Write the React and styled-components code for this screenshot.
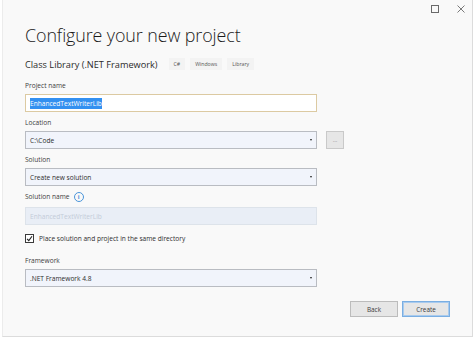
import React from "react";
import styled, { createGlobalStyle } from "styled-components";

const GlobalStyle = createGlobalStyle`
  html, body {
    margin: 0;
    padding: 0;
    background: #ffffff;
  }
  body {
    font-family: "Open Sans", "Noto Sans", sans-serif;
  }
`;

const Window = styled.div`
  box-sizing: border-box;
  width: 471px;
  height: 337px;
  margin-left: 2px;
  background: #f9f9f9;
  border-right: 1px solid #dcdcdc;
  border-bottom: 1px solid #dcdcdc;
  border-left: 1px solid #ececec;
  display: flex;
  flex-direction: column;
`;

const TitleBar = styled.div`
  height: 18px;
  display: flex;
  justify-content: flex-end;
  align-items: center;
  gap: 14px;
  padding-right: 5px;
`;

const WinButton = styled.div`
  width: 12px;
  height: 12px;
  display: flex;
  align-items: center;
  justify-content: center;
  color: #6a6a6a;
`;

const Content = styled.div`
  padding: 0 0 0 22px;
  display: flex;
  flex-direction: column;
`;

const Title = styled.h1`
  margin: 4px 0 0 0;
  font-size: 17.9px;
  font-weight: 300;
  color: #1b1b1b;
  line-height: 26px;
  letter-spacing: -0.1px;
`;

const SubRow = styled.div`
  display: flex;
  align-items: center;
  gap: 5px;
  margin-top: 9px;
  height: 14px;
`;

const SubTitle = styled.span`
  font-size: 9.2px;
  color: #2b2b2b;
  margin-right: 6px;
`;

const Tag = styled.span`
  font-size: 5.2px;
  color: #555;
  background: #f3f3f3;
  padding: 2px 5px;
`;

const Field = styled.div`
  display: flex;
  flex-direction: column;
  gap: 4px;
  margin-top: ${(p) => p.$top}px;
`;

const Label = styled.div`
  display: flex;
  align-items: center;
  gap: 4px;
  height: ${(p) => p.$h || 10}px;
  font-size: 6.6px;
  color: #3c3c3c;
`;

const InfoIcon = styled.span`
  box-sizing: border-box;
  width: 10px;
  height: 10px;
  border: 1px solid #4a95da;
  border-radius: 50%;
  color: #3a88d4;
  font-size: 6px;
  font-weight: 700;
  display: flex;
  align-items: center;
  justify-content: center;
  line-height: 1;
`;

const Row = styled.div`
  display: flex;
  align-items: center;
  gap: 9px;
`;

const Box = styled.div`
  box-sizing: border-box;
  width: 292px;
  height: 18px;
  display: flex;
  align-items: center;
  justify-content: space-between;
  padding: 0 3px 0 4px;
  font-size: 6.6px;
  background: ${(p) =>
    p.$variant === "focus" ? "#ffffff" : p.$variant === "disabled" ? "#e9eef6" : "#f1f4fb"};
  border: 1px solid
    ${(p) =>
      p.$variant === "focus" ? "#dccaa2" : p.$variant === "disabled" ? "#dde3ea" : "#b9bcc2"};
  color: ${(p) => (p.$variant === "disabled" ? "#c3ccd8" : "#2d2d2d")};
`;

const Selected = styled.span`
  background: #3390f0;
  color: #ffffff;
  padding: 1px 0;
  line-height: 9px;
`;

const Caret = styled.span`
  width: 0;
  height: 0;
  border-left: 1.5px solid transparent;
  border-right: 1.5px solid transparent;
  border-top: 2px solid #222;
  margin-right: 1px;
`;

const SmallButton = styled.div`
  box-sizing: border-box;
  width: 18px;
  height: 18px;
  background: #e6e6e6;
  border: 1px solid #c9c9c9;
  display: flex;
  align-items: center;
  justify-content: center;
  font-size: 6px;
  color: #888;
`;

const CheckRow = styled.label`
  display: flex;
  align-items: center;
  gap: 5px;
  margin-top: 9px;
  height: 9px;
  font-size: 6.6px;
  color: #2d2d2d;
`;

const CheckBox = styled.span`
  box-sizing: border-box;
  width: 9px;
  height: 9px;
  border: 1px solid #3a3a3a;
  background: #fff;
  display: flex;
  align-items: center;
  justify-content: center;
`;

const Footer = styled.div`
  display: flex;
  justify-content: flex-end;
  gap: 4px;
  margin-top: 14px;
  padding-right: 22px;
`;

const Button = styled.button`
  box-sizing: border-box;
  width: 48px;
  height: 16px;
  padding: 0;
  font-family: inherit;
  font-size: 6.4px;
  color: #3a3a3a;
  background: #e6e6e6;
  border: 1px solid ${(p) => (p.$primary ? "#7aaee2" : "#bcbcbc")};
  box-shadow: ${(p) => (p.$primary ? "inset 0 0 0 1px #a9cbee" : "none")};
`;

export default function App() {
  return (
    <>
      <GlobalStyle />
      <Window>
        <TitleBar>
          <WinButton>
            <svg width="8" height="8" viewBox="0 0 8 8">
              <rect x="0.5" y="0.5" width="7" height="7" fill="none" stroke="#6a6a6a" strokeWidth="1" />
            </svg>
          </WinButton>
          <WinButton>
            <svg width="8" height="8" viewBox="0 0 8 8">
              <path d="M0.5 0.5 L7.5 7.5 M7.5 0.5 L0.5 7.5" stroke="#6a6a6a" strokeWidth="0.9" />
            </svg>
          </WinButton>
        </TitleBar>
        <Content>
          <Title>Configure your new project</Title>
          <SubRow>
            <SubTitle>Class Library (.NET Framework)</SubTitle>
            <Tag>C#</Tag>
            <Tag>Windows</Tag>
            <Tag>Library</Tag>
          </SubRow>

          <Field $top={9}>
            <Label>Project name</Label>
            <Box $variant="focus">
              <Selected>EnhancedTextWriterLib</Selected>
            </Box>
          </Field>

          <Field $top={5}>
            <Label>Location</Label>
            <Row>
              <Box>
                <span>C:\Code</span>
                <Caret />
              </Box>
              <SmallButton>...</SmallButton>
            </Row>
          </Field>

          <Field $top={5}>
            <Label>Solution</Label>
            <Box>
              <span>Create new solution</span>
              <Caret />
            </Box>
          </Field>

          <Field $top={4}>
            <Label $h={13}>
              Solution name
              <InfoIcon>i</InfoIcon>
            </Label>
            <Box $variant="disabled">
              <span>EnhancedTextWriterLib</span>
            </Box>
          </Field>

          <CheckRow>
            <CheckBox>
              <svg width="7" height="7" viewBox="0 0 7 7">
                <path d="M1 3.8 L2.8 5.6 L6 1.2" fill="none" stroke="#222" strokeWidth="1.1" />
              </svg>
            </CheckBox>
            Place solution and project in the same directory
          </CheckRow>

          <Field $top={12}>
            <Label>Framework</Label>
            <Box>
              <span>.NET Framework 4.8</span>
              <Caret />
            </Box>
          </Field>

          <Footer>
            <Button>Back</Button>
            <Button $primary>Create</Button>
          </Footer>
        </Content>
      </Window>
    </>
  );
}
